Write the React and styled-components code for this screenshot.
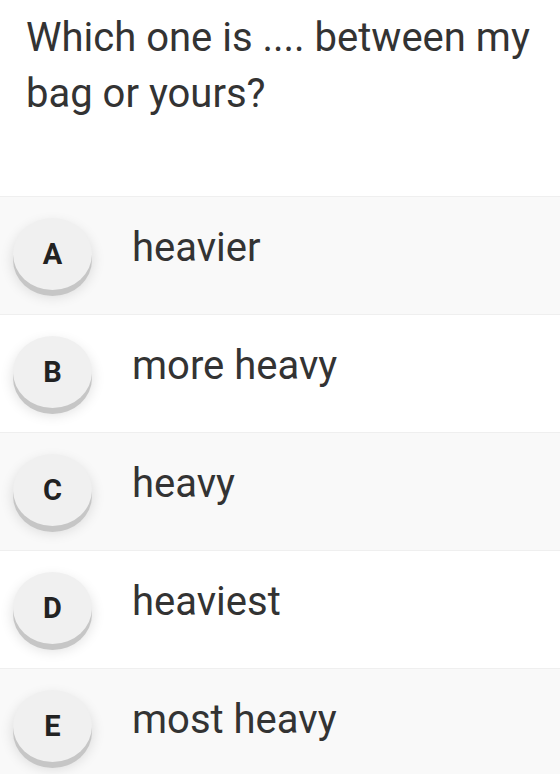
import styled, { createGlobalStyle } from "styled-components";

const GlobalStyle = createGlobalStyle`
  body {
    margin: 0;
    background: #ffffff;
    font-family: Roboto, "Liberation Sans", sans-serif;
  }
`;

const Page = styled.div`
  width: 560px;
  height: 774px;
  overflow: hidden;
  background: #ffffff;
`;

const Question = styled.h2`
  margin: 0;
  padding: 10px 16px 74px 26px;
  font-size: 40px;
  font-weight: 400;
  line-height: 56px;
  color: #333333;
`;

const OptionList = styled.ul`
  list-style: none;
  margin: 0;
  padding: 0;
`;

const Option = styled.li`
  display: flex;
  align-items: center;
  gap: 40px;
  height: 118px;
  box-sizing: border-box;
  padding: 0 0 4px 13px;
  border-top: 1px solid #efefef;
  background: ${(p) => (p.$shaded ? "#f9f9f9" : "#ffffff")};
`;

const Badge = styled.span`
  display: flex;
  align-items: center;
  justify-content: center;
  flex-shrink: 0;
  width: 79px;
  height: 72px;
  border-radius: 50%;
  background: #f0f0f0;
  box-shadow: 0 6px 0 #c6c6c6, 0 6px 14px rgba(0, 0, 0, 0.14);
  font-size: 29px;
  font-weight: 700;
  color: #222222;
`;

const Label = styled.span`
  font-size: 40px;
  color: #333333;
  margin-top: -12px;
`;

const options = [
  ["A", "heavier"],
  ["B", "more heavy"],
  ["C", "heavy"],
  ["D", "heaviest"],
  ["E", "most heavy"],
];

export default function App() {
  return (
    <Page>
      <GlobalStyle />
      <Question>Which one is .... between my bag or yours?</Question>
      <OptionList>
        {options.map(([key, text], i) => (
          <Option key={key} $shaded={i % 2 === 0}>
            <Badge>{key}</Badge>
            <Label>{text}</Label>
          </Option>
        ))}
      </OptionList>
    </Page>
  );
}
